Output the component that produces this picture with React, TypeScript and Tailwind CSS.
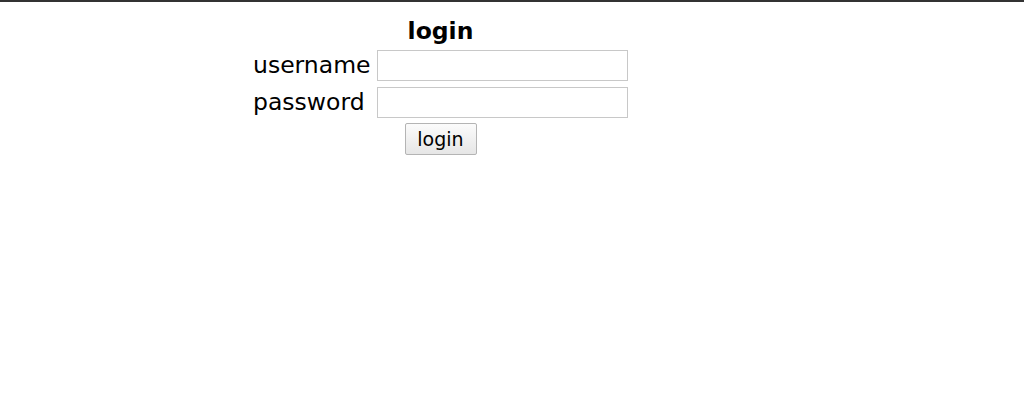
import React from "react";

export default function App() {
  return (
    <div className="min-h-[419px] w-full bg-white border-t-2 border-[#333] font-['DejaVu_Sans',sans-serif] text-black">
      <form className="ml-[253px] w-[375px] pt-[15px]" onSubmit={(e) => e.preventDefault()}>
        <div className="h-[29px] flex items-center justify-center text-[23.5px] font-bold">login</div>
        <div className="mt-[4px] flex flex-col gap-[6px]">
          <label className="flex items-center h-[31px]">
            <span className="w-[124px] text-[23.5px] leading-none">username</span>
            <input className="h-[31px] w-[251px] border border-[#c8c8c8] bg-white outline-none px-1 text-[18px]" />
          </label>
          <label className="flex items-center h-[31px]">
            <span className="w-[124px] text-[23.5px] leading-none">password</span>
            <input type="password" className="h-[31px] w-[251px] border border-[#c8c8c8] bg-white outline-none px-1 text-[18px]" />
          </label>
        </div>
        <div className="mt-[5px] flex justify-center">
          <button
            type="submit"
            className="h-[32px] w-[72px] border border-[#b4b4b4] rounded-[2px] bg-gradient-to-b from-[#fbfbfb] to-[#e6e6e6] text-[19px] leading-none"
          >
            login
          </button>
        </div>
      </form>
    </div>
  );
}
